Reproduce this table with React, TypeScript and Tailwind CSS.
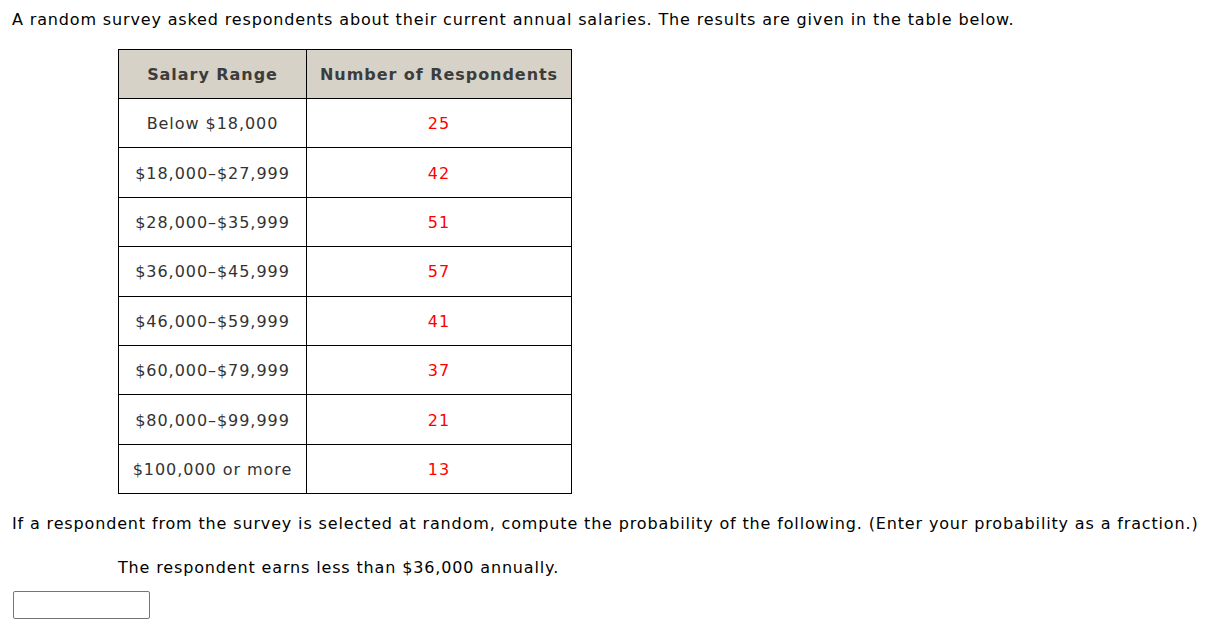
const rows: [string, number][] = [
  ["Below $18,000", 25],
  ["$18,000–$27,999", 42],
  ["$28,000–$35,999", 51],
  ["$36,000–$45,999", 57],
  ["$46,000–$59,999", 41],
  ["$60,000–$79,999", 37],
  ["$80,000–$99,999", 21],
  ["$100,000 or more", 13],
];

export default function App() {
  return (
    <div className="bg-white min-h-screen text-black text-[16px] tracking-[0.85px] font-['Verdana','DejaVu_Sans',sans-serif] px-3 pt-[9px]">
      <p className="leading-[22px] whitespace-nowrap">
        A random survey asked respondents about their current annual salaries. The results are given in the table below.
      </p>
      <table className="ml-[106px] mt-[18px] border-collapse border border-black text-center text-[#333] tracking-[0.95px]">
        <thead>
          <tr className="bg-[#d6d2c7] h-[49px]">
            <th className="border border-black w-[188px] pt-[2px] font-bold text-[#3c3c3c]">Salary Range</th>
            <th className="border border-black w-[265px] pt-[2px] font-bold text-[#3c3c3c]">Number of Respondents</th>
          </tr>
        </thead>
        <tbody>
          {rows.map(([range, n]) => (
            <tr key={range} className="h-[49.4px]">
              <td className="border border-black pt-[2px]">{range}</td>
              <td className="border border-black pt-[2px] text-[#ff0000]">{n}</td>
            </tr>
          ))}
        </tbody>
      </table>
      <p className="mt-[19px] leading-[22px] whitespace-nowrap tracking-[0.85px]">
        If a respondent from the survey is selected at random, compute the probability of the following. (Enter your probability as a fraction.)
      </p>
      <p className="ml-[106px] mt-[22px] leading-[22px]">The respondent earns less than $36,000 annually.</p>
      <input type="text" className="block mt-[12px] ml-px w-[137px] h-[28px] border border-[#767676] rounded-[2px]" />
    </div>
  );
}
